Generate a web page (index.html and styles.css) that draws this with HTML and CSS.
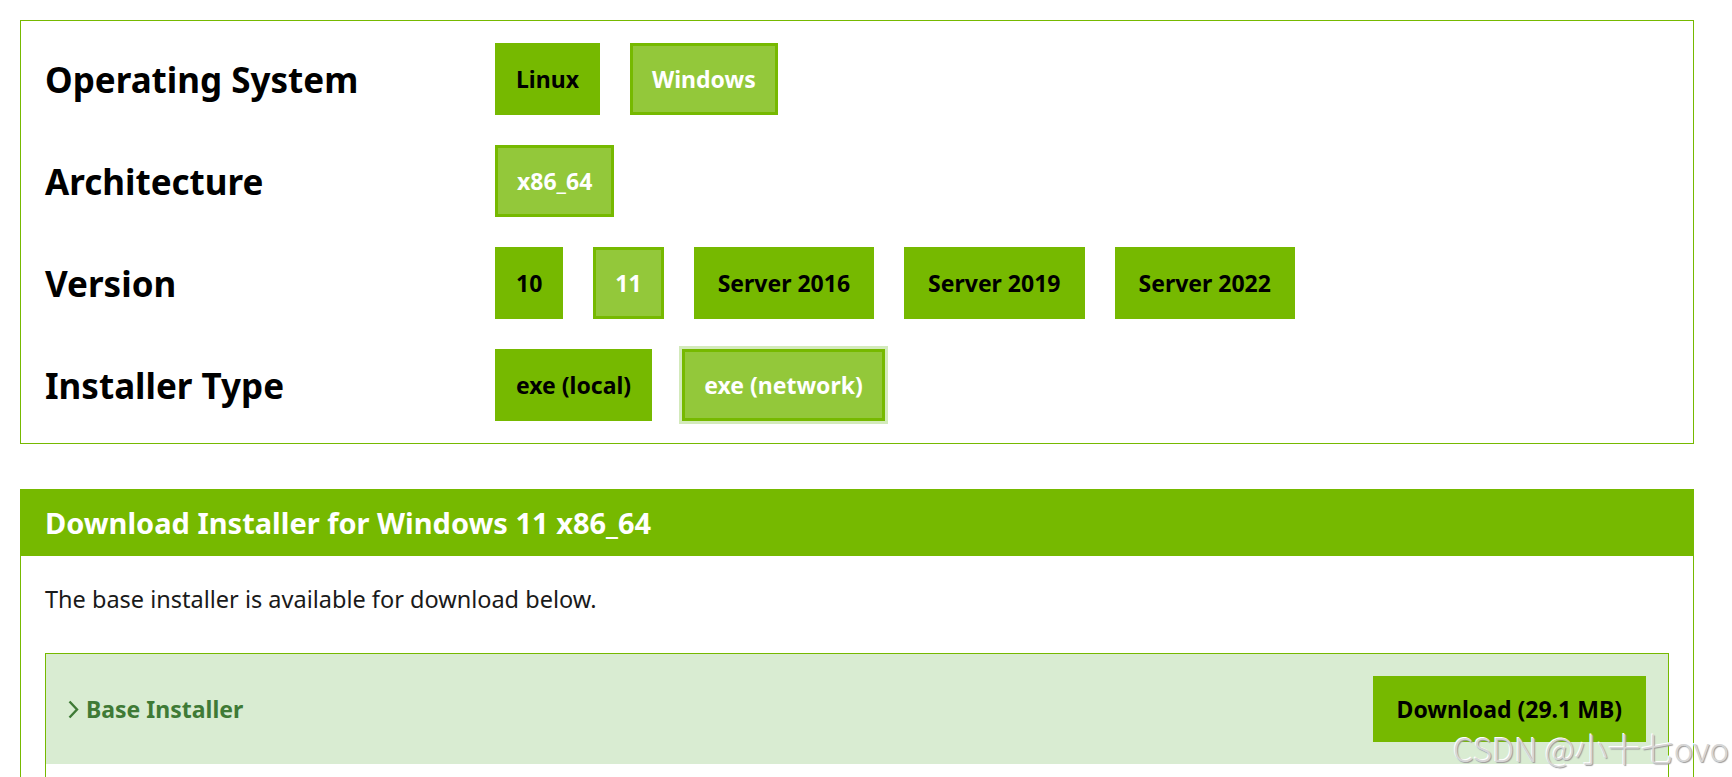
FILE: index.html
```html
<!DOCTYPE html>
<html lang="en">
<head>
    <meta charset="UTF-8">
    <meta name="viewport" content="width=device-width, initial-scale=1.0">
    <title>CUDA Toolkit Downloads</title>
    <link rel="stylesheet" href="styles.css">
</head>
<body>

    <div class="selector">
        <div class="sel-row">
            <div class="sel-label">Operating System</div>
            <div class="sel-options">
                <button class="opt">Linux</button>
                <button class="opt active">Windows</button>
            </div>
        </div>
        <div class="sel-row">
            <div class="sel-label">Architecture</div>
            <div class="sel-options">
                <button class="opt active">x86_64</button>
            </div>
        </div>
        <div class="sel-row">
            <div class="sel-label">Version</div>
            <div class="sel-options">
                <button class="opt">10</button>
                <button class="opt active">11</button>
                <button class="opt wide">Server 2016</button>
                <button class="opt wide">Server 2019</button>
                <button class="opt wide">Server 2022</button>
            </div>
        </div>
        <div class="sel-row">
            <div class="sel-label">Installer Type</div>
            <div class="sel-options">
                <button class="opt">exe (local)</button>
                <button class="opt active focus">exe (network)</button>
            </div>
        </div>
    </div>

    <div class="download">
        <h2 class="download-title">Download Installer for Windows 11 x86_64</h2>
        <p class="download-note">The base installer is available for download below.</p>
        <div class="installer">
            <div class="installer-head">
                <div class="installer-name">
                    <svg class="chevron" width="11" height="19" viewBox="0 0 11 19">
                        <polyline points="1.5,1.5 9,9.5 1.5,17.5" fill="none" stroke="#3f7a36" stroke-width="2.4"/>
                    </svg>
                    Base Installer
                </div>
                <button class="dl-btn">Download (29.1 MB)</button>
            </div>
        </div>
    </div>

    <div class="watermark">CSDN @小十七ovo</div>

</body>
</html>
```

FILE: styles.css
```css
body {
    font-family: "Noto Sans", Arial, sans-serif;
    margin: 0;
    padding: 20px 38px 0 20px;
    color: #000;
    background: #fff;
    overflow: hidden;
    height: 100vh;
    box-sizing: border-box;
    display: flex;
    flex-direction: column;
}
.selector {
    border: 1px solid #76b900;
    padding: 22px 24px;
    display: flex;
    flex-direction: column;
    gap: 30px;
}
.sel-row {
    display: flex;
    align-items: center;
}
.sel-label {
    width: 450px;
    font-size: 35px;
    font-weight: bold;
}
.sel-options {
    display: flex;
    gap: 30px;
}
.opt {
    font-family: inherit;
    height: 72px;
    padding: 0 19px;
    font-size: 23px;
    font-weight: bold;
    color: #000;
    background-color: #76b900;
    border: 2px solid #76b900;
}
.opt.wide {
    padding: 0 22px;
}
.opt.active {
    background-color: #93c83a;
    border: 3px solid #76b900;
    padding: 0 19px;
    color: #fff;
}
.opt.focus {
    box-shadow: 0 0 0 3px #d3eabb;
}
.download {
    margin-top: 45px;
    border: 1px solid #76b900;
    border-top: none;
    border-bottom: none;
    flex: 1;
    display: flex;
    flex-direction: column;
}
.download-title {
    margin: 0;
    height: 67px;
    padding: 0 24px;
    display: flex;
    align-items: center;
    background-color: #76b900;
    color: #fff;
    font-size: 29px;
    font-weight: bold;
}
.download-note {
    margin: 0;
    padding: 28px 24px 38px;
    line-height: 31px;
    font-size: 23.5px;
    color: #1a1a1a;
}
.installer {
    margin: 0 24px;
    border: 1px solid #76b900;
    border-bottom: none;
    flex: 1;
}
.installer-head {
    background-color: #d9ecd2;
    padding: 22px;
    display: flex;
    align-items: center;
    justify-content: space-between;
}
.installer-name {
    display: flex;
    align-items: center;
    gap: 7px;
    font-size: 23px;
    font-weight: bold;
    color: #3f7a36;
}
.dl-btn {
    font-family: inherit;
    height: 66px;
    padding: 0 24px;
    font-size: 23px;
    font-weight: bold;
    color: #000;
    background-color: #76b900;
    border: none;
}
.watermark {
    position: absolute;
    left: 1453px;
    top: 724px;
    font-family: "Noto Sans CJK SC", sans-serif;
    font-weight: 300;
    font-size: 33px;
    color: #d6d6d6;
    text-shadow: 1px 1px 1px #9a9a9a, -1px -1px 0 #fff;
    white-space: nowrap;
}
```
